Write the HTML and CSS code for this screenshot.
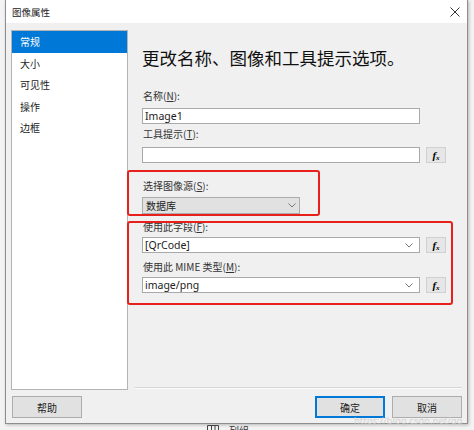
FILE: index.html
```html
<!DOCTYPE html>
<html lang="zh-CN">
<head>
<meta charset="utf-8">
<title>图像属性</title>
<link rel="stylesheet" href="styles.css">
</head>
<body>
<div class="screen">
  <div class="dialog">
    <div class="titlebar">
      <span class="title">图像属性</span>
      <svg class="close" width="10" height="10" viewBox="0 0 10 10"><path d="M0.5 0.5L9.5 9.5M9.5 0.5L0.5 9.5" stroke="#333" stroke-width="1" fill="none"/></svg>
    </div>
    <div class="body">
      <div class="main">
        <ul class="nav">
          <li class="active">常规</li>
          <li>大小</li>
          <li>可见性</li>
          <li>操作</li>
          <li>边框</li>
        </ul>
        <div class="panel">
          <h1 class="heading">更改名称、图像和工具提示选项。</h1>
          <div class="lbl l1">名称(<u>N</u>):</div>
          <div class="row r1"><div class="input">Image1</div></div>
          <div class="lbl l2">工具提示(<u>T</u>):</div>
          <div class="row r2"><div class="input"></div><div class="fx"><i>f</i><sub>x</sub></div></div>
          <div class="lbl l3">选择图像源(<u>S</u>):</div>
          <div class="row r3"><div class="select"><span>数据库</span><svg class="chev" width="8" height="5" viewBox="0 0 8 5"><path d="M0.5 0.5L4 4L7.5 0.5" stroke="#777" stroke-width="1" fill="none"/></svg></div></div>
          <div class="lbl l4">使用此字段(<u>F</u>):</div>
          <div class="row r4"><div class="input combo"><span>[QrCode]</span><svg class="chev" width="8" height="5" viewBox="0 0 8 5"><path d="M0.5 0.5L4 4L7.5 0.5" stroke="#777" stroke-width="1" fill="none"/></svg></div><div class="fx"><i>f</i><sub>x</sub></div></div>
          <div class="lbl l5">使用此 MIME 类型(<u>M</u>):</div>
          <div class="row r5"><div class="input combo"><span>image/png</span><svg class="chev" width="8" height="5" viewBox="0 0 8 5"><path d="M0.5 0.5L4 4L7.5 0.5" stroke="#777" stroke-width="1" fill="none"/></svg></div><div class="fx"><i>f</i><sub>x</sub></div></div>
          <div class="sep"></div>
        </div>
      </div>
      <div class="footer">
        <button class="btn">帮助</button>
        <span class="spacer"></span>
        <button class="btn primary">确定</button>
        <button class="btn">取消</button>
      </div>
    </div>
  </div>
  <div class="below">
    <svg class="gridicon" width="12" height="8" viewBox="0 0 12 8"><path d="M0.5 0.5H11.5V8M0.5 0.5V8M4.5 0.5V8M8 0.5V8" stroke="#444" stroke-width="1" fill="none"/></svg>
    <span class="below-text">列组</span>
  </div>
  <div class="mark mark1"></div>
  <div class="mark mark2"></div>
  <div class="watermark">https://blog.csdn.net/qq_</div>
</div>
</body>
</html>
```
FILE: styles.css
```css
html, body {
  margin: 0;
  padding: 0;
}
body {
  width: 474px;
  height: 430px;
  overflow: hidden;
  background: #f3f3f3;
  font-family: "Noto Sans CJK SC", sans-serif;
  color: #000;
}
.screen {
  position: relative;
  width: 474px;
  height: 430px;
  padding-left: 5px;
  box-sizing: border-box;
}
.dialog {
  width: 463px;
  height: 424px;
  box-sizing: border-box;
  border: 1px solid #8e8e8e;
  border-top: 0;
  background: #f0f0f0;
  display: flex;
  flex-direction: column;
  box-shadow: 1px 1px 3px rgba(0, 0, 0, 0.25);
}
.titlebar {
  flex: none;
  height: 23px;
  background: #fff;
  display: flex;
  align-items: center;
  justify-content: space-between;
  padding: 0 7px 0 6px;
}
.title {
  font-size: 9.5px;
  line-height: 12px;
  color: #222;
}
.close {
  display: block;
}
.body {
  flex: 1;
  padding: 7px 5px 5px 5px;
  display: flex;
  flex-direction: column;
}
.main {
  display: flex;
  height: 360px;
  gap: 14px;
}
.nav {
  flex: none;
  width: 117px;
  height: 360px;
  box-sizing: border-box;
  border: 1px solid #b4b4b4;
  background: #fff;
  margin: 0;
  padding: 0;
  list-style: none;
}
.nav li {
  height: 21.5px;
  line-height: 21.5px;
  padding-left: 8px;
  font-size: 10px;
  color: #222;
}
.nav li.active {
  background: #0078d7;
  color: #fff;
}
.panel {
  flex: 1;
  display: flex;
  flex-direction: column;
}
.heading {
  margin: 16px 0 0 0;
  font-size: 17.5px;
  line-height: 24px;
  font-weight: normal;
  color: #111;
}
.lbl {
  font-size: 10px;
  line-height: 14px;
  color: #333;
  padding-left: 1px;
}
.lbl u {
  text-decoration: underline;
  text-underline-offset: 1px;
}
.l1 { margin-top: 19px; }
.r1 { margin-top: 5px; }
.l2 { margin-top: 3px; }
.r2 { margin-top: 6px; }
.l3 { margin-top: 16px; }
.r3 { margin-top: 4px; }
.l4 { margin-top: 6px; }
.r4 { margin-top: 3px; }
.l5 { margin-top: 7px; }
.r5 { margin-top: 3px; }
.row {
  display: flex;
  gap: 6px;
  align-items: center;
}
.input {
  width: 278px;
  height: 16px;
  box-sizing: border-box;
  border: 1px solid #a9a9a9;
  background: #fff;
  font-family: "Noto Sans", sans-serif;
  font-size: 10.5px;
  line-height: 14px;
  padding-left: 2px;
  color: #222;
}
.combo {
  display: flex;
  align-items: center;
  justify-content: space-between;
  padding-right: 6px;
}
.select {
  width: 158px;
  height: 17px;
  box-sizing: border-box;
  border: 1px solid #adadad;
  background: #e1e1e1;
  font-size: 10px;
  line-height: 15px;
  padding: 0 3px 0 3px;
  display: flex;
  align-items: center;
  justify-content: space-between;
  color: #222;
}
.chev {
  display: block;
}
.fx {
  width: 20px;
  height: 16px;
  box-sizing: border-box;
  border: 1px solid #d0d0d0;
  background: #e6e6e6;
  font-family: "Liberation Serif", serif;
  font-weight: bold;
  font-size: 11px;
  line-height: 14px;
  text-align: center;
  color: #000;
}
.fx i {
  font-style: italic;
}
.fx sub {
  font-size: 7px;
  font-style: italic;
  vertical-align: -1px;
}
.sep {
  margin-top: auto;
  margin-bottom: 1px;
  margin-left: -7px;
  height: 1px;
  background: #d5d5d5;
  border-bottom: 1px solid #fafafa;
}
.footer {
  margin-top: 6px;
  display: flex;
  gap: 7px;
  padding-left: 1px;
}
.spacer {
  flex: 1;
}
.btn {
  width: 70px;
  height: 22px;
  box-sizing: border-box;
  border: 1px solid #adadad;
  background: #e1e1e1;
  font-family: "Noto Sans CJK SC", sans-serif;
  font-size: 10px;
  padding: 0;
  color: #222;
}
.btn.primary {
  border: 2px solid #0078d7;
}
.below {
  display: flex;
  align-items: flex-start;
  gap: 10px;
  height: 6px;
  overflow: hidden;
  padding-left: 202px;
  padding-top: 1px;
}
.gridicon {
  display: block;
}
.below-text {
  font-size: 10px;
  line-height: 12px;
  color: #333;
}
.mark {
  position: absolute;
  box-sizing: border-box;
  border: 2px solid #e8201c;
  border-radius: 3px;
}
.mark1 {
  left: 127px;
  top: 170px;
  width: 193px;
  height: 46px;
}
.mark2 {
  left: 127px;
  top: 221px;
  width: 326px;
  height: 84px;
}
.watermark {
  position: absolute;
  left: 354px;
  top: 415px;
  font-family: "Noto Sans", sans-serif;
  font-size: 9.5px;
  line-height: 11px;
  color: rgba(205, 205, 205, 0.8);
  white-space: nowrap;
}
```
